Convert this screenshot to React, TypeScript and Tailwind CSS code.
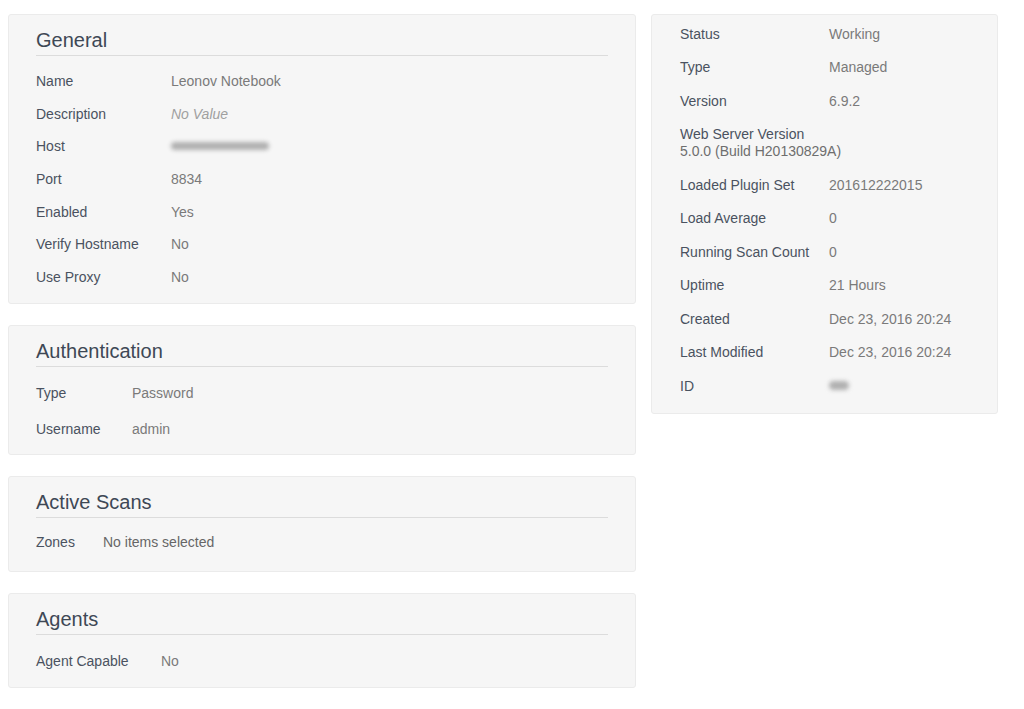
import type { ReactNode } from 'react'

const font = { fontFamily: '"Liberation Sans", Arial, sans-serif' }

function Panel({ title, children, className = '' }: { title?: string; children: ReactNode; className?: string }) {
  return (
    <section className={`rounded-[3px] border border-[#ebebeb] bg-[#f6f6f6] px-[27px] ${className}`}>
      {title && (
        <h2 className="border-b border-[#dcdcdc] pb-[4px] text-[20px] leading-[22px] font-normal text-[#3e4855]">{title}</h2>
      )}
      {children}
    </section>
  )
}

function Fila({ etiqueta, ancho, alto, children }: { etiqueta: string; ancho: string; alto: string; children: ReactNode }) {
  return (
    <div className={`flex items-center ${alto}`}>
      <div className={`shrink-0 text-[#4a5260] ${ancho}`}>{etiqueta}</div>
      <div className="text-[#7a7a7a]">{children}</div>
    </div>
  )
}

const Borroso = ({ className }: { className: string }) => <div className={`rounded-full bg-[#b0b0b0] blur-[2px] ${className}`} />

export default function App() {
  const general: [string, ReactNode][] = [
    ['Name', 'Leonov Notebook'],
    ['Description', <span className="italic text-[#a0a0a0]">No Value</span>],
    ['Host', <Borroso className="h-[8px] w-[98px]" />],
    ['Port', '8834'],
    ['Enabled', 'Yes'],
    ['Verify Hostname', 'No'],
    ['Use Proxy', 'No'],
  ]
  const antes: [string, ReactNode][] = [['Status', 'Working'], ['Type', 'Managed'], ['Version', '6.9.2']]
  const despues: [string, ReactNode][] = [
    ['Loaded Plugin Set', '201612222015'],
    ['Load Average', '0'],
    ['Running Scan Count', '0'],
    ['Uptime', '21 Hours'],
    ['Created', 'Dec 23, 2016 20:24'],
    ['Last Modified', 'Dec 23, 2016 20:24'],
    ['ID', <Borroso className="h-[9px] w-[20px]" />],
  ]

  return (
    <div style={font} className="flex min-h-[709px] gap-[15px] bg-white px-[8px] pt-[14px] text-[14px] leading-[20px]">
      <div className="flex w-[628px] flex-col gap-[21px]">
        <Panel title="General" className="pt-[14px] pb-[9.6px]">
          <div className="mt-[8.5px]">
            {general.map(([k, v]) => <Fila key={k} etiqueta={k} ancho="w-[135px]" alto="h-[32.7px]">{v}</Fila>)}
          </div>
        </Panel>
        <Panel title="Authentication" className="pt-[14px] pb-[7px]">
          <div className="mt-[8px]">
            <Fila etiqueta="Type" ancho="w-[96px]" alto="h-[36px]">Password</Fila>
            <Fila etiqueta="Username" ancho="w-[96px]" alto="h-[36px]">admin</Fila>
          </div>
        </Panel>
        <Panel title="Active Scans" className="pt-[14px] pb-[11px]">
          <div className="mt-[6px]">
            <Fila etiqueta="Zones" ancho="w-[67px]" alto="h-[36px]"><span className="text-[#666]">No items selected</span></Fila>
          </div>
        </Panel>
        <Panel title="Agents" className="pt-[14px] pb-[8px]">
          <div className="mt-[8px]">
            <Fila etiqueta="Agent Capable" ancho="w-[125px]" alto="h-[36px]">No</Fila>
          </div>
        </Panel>
      </div>

      <div className="w-[347px] self-start">
        <Panel className="px-[28px] pt-[2px] pb-[10.5px]">
          {antes.map(([k, v]) => <Fila key={k} etiqueta={k} ancho="w-[149px]" alto="h-[33.5px]">{v}</Fila>)}
          <div className="flex h-[50.5px] flex-col justify-center leading-[17px]">
            <div className="text-[#4a5260]">Web Server Version</div>
            <div className="text-[#6e6e6e]">5.0.0 (Build H20130829A)</div>
          </div>
          {despues.map(([k, v]) => <Fila key={k} etiqueta={k} ancho="w-[149px]" alto="h-[33.5px]">{v}</Fila>)}
        </Panel>
      </div>
    </div>
  )
}
